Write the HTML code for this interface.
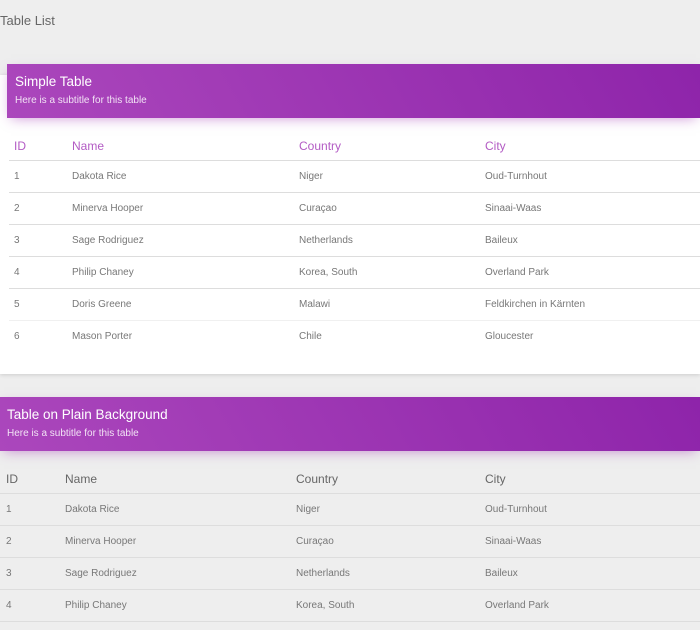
<!DOCTYPE html>
<html><head><style>
*{margin:0;padding:0;box-sizing:border-box}
body{width:700px;height:630px;overflow:hidden;background:#eeeeee;font-family:"Liberation Sans",sans-serif;color:#3c4858;position:relative}
.t{position:absolute;left:0;top:13px;font-size:13px;color:#666}
.card{position:absolute;left:0;top:75px;width:700px;height:299px;background:#fff;box-shadow:0 1px 4px rgba(0,0,0,.14)}
.hd{position:absolute;height:54px;background:linear-gradient(60deg,#ab47bc,#8e24aa);box-shadow:0 4px 12px -4px rgba(156,39,176,.5);color:#fff}
.hd h4{font-size:13.5px;font-weight:normal;position:absolute;left:8px;top:10px}
.hd p{font-size:10px;position:absolute;left:8px;top:31px;color:rgba(255,255,255,.85)}
.row{position:absolute;height:32px;font-size:10px;color:#777}
.row span{position:absolute;top:10px}
.row.b{border-bottom:1px solid #ddd}
.th{font-size:12px}
.th span{top:10px}
</style></head><body>
<div class="t">Table List</div>
<div class="card"></div>
<div class="hd" style="left:7px;top:64px;width:693px"><h4>Simple Table</h4><p>Here is a subtitle for this table</p></div>
<div class="hd" style="left:0;top:397px;width:700px"><h4 style="left:7px">Table on Plain Background</h4><p style="left:7px">Here is a subtitle for this table</p></div>

<div class="row b th" style="left:9px;top:129px;width:691px;color:#b35bc4"><span style="left:5px">ID</span><span style="left:63px">Name</span><span style="left:290px">Country</span><span style="left:476px">City</span></div>
<div class="row b" style="left:9px;top:161px;width:691px"><span style="left:5px">1</span><span style="left:63px">Dakota Rice</span><span style="left:290px">Niger</span><span style="left:476px">Oud-Turnhout</span></div>
<div class="row b" style="left:9px;top:193px;width:691px"><span style="left:5px">2</span><span style="left:63px">Minerva Hooper</span><span style="left:290px">Curaçao</span><span style="left:476px">Sinaai-Waas</span></div>
<div class="row b" style="left:9px;top:225px;width:691px"><span style="left:5px">3</span><span style="left:63px">Sage Rodriguez</span><span style="left:290px">Netherlands</span><span style="left:476px">Baileux</span></div>
<div class="row b" style="left:9px;top:257px;width:691px"><span style="left:5px">4</span><span style="left:63px">Philip Chaney</span><span style="left:290px">Korea, South</span><span style="left:476px">Overland Park</span></div>
<div class="row b" style="left:9px;top:289px;width:691px;border-color:#f0f0f0"><span style="left:5px">5</span><span style="left:63px">Doris Greene</span><span style="left:290px">Malawi</span><span style="left:476px">Feldkirchen in Kärnten</span></div>
<div class="row" style="left:9px;top:321px;width:691px"><span style="left:5px">6</span><span style="left:63px">Mason Porter</span><span style="left:290px">Chile</span><span style="left:476px">Gloucester</span></div>

<div class="row b th" style="left:0;top:462px;width:700px;color:#666"><span style="left:6px">ID</span><span style="left:65px">Name</span><span style="left:296px">Country</span><span style="left:485px">City</span></div>
<div class="row b" style="left:0;top:494px;width:700px"><span style="left:6px">1</span><span style="left:65px">Dakota Rice</span><span style="left:296px">Niger</span><span style="left:485px">Oud-Turnhout</span></div>
<div class="row b" style="left:0;top:526px;width:700px"><span style="left:6px">2</span><span style="left:65px">Minerva Hooper</span><span style="left:296px">Curaçao</span><span style="left:485px">Sinaai-Waas</span></div>
<div class="row b" style="left:0;top:558px;width:700px"><span style="left:6px">3</span><span style="left:65px">Sage Rodriguez</span><span style="left:296px">Netherlands</span><span style="left:485px">Baileux</span></div>
<div class="row b" style="left:0;top:590px;width:700px"><span style="left:6px">4</span><span style="left:65px">Philip Chaney</span><span style="left:296px">Korea, South</span><span style="left:485px">Overland Park</span></div>
</body></html>
